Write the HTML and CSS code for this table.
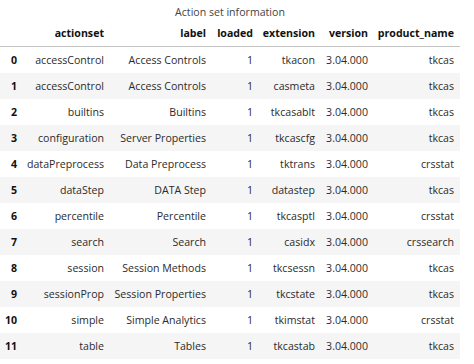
FILE: index.html
```html
<!DOCTYPE html>
<html lang="en">
<head>
    <meta charset="UTF-8">
    <title>Action set information</title>
    <link rel="stylesheet" href="styles.css">
</head>
<body>

<table class="dataframe">
    <caption>Action set information</caption>
    <colgroup>
        <col class="c-index">
        <col class="c-actionset">
        <col class="c-label">
        <col class="c-loaded">
        <col class="c-extension">
        <col class="c-version">
        <col class="c-product">
    </colgroup>
    <thead>
        <tr>
            <th></th>
            <th>actionset</th>
            <th>label</th>
            <th>loaded</th>
            <th>extension</th>
            <th>version</th>
            <th>product_name</th>
        </tr>
    </thead>
    <tbody>
        <tr><th>0</th><td>accessControl</td><td>Access Controls</td><td>1</td><td>tkacon</td><td>3.04.000</td><td>tkcas</td></tr>
        <tr><th>1</th><td>accessControl</td><td>Access Controls</td><td>1</td><td>casmeta</td><td>3.04.000</td><td>tkcas</td></tr>
        <tr><th>2</th><td>builtins</td><td>Builtins</td><td>1</td><td>tkcasablt</td><td>3.04.000</td><td>tkcas</td></tr>
        <tr><th>3</th><td>configuration</td><td>Server Properties</td><td>1</td><td>tkcascfg</td><td>3.04.000</td><td>tkcas</td></tr>
        <tr><th>4</th><td>dataPreprocess</td><td>Data Preprocess</td><td>1</td><td>tktrans</td><td>3.04.000</td><td>crsstat</td></tr>
        <tr><th>5</th><td>dataStep</td><td>DATA Step</td><td>1</td><td>datastep</td><td>3.04.000</td><td>tkcas</td></tr>
        <tr><th>6</th><td>percentile</td><td>Percentile</td><td>1</td><td>tkcasptl</td><td>3.04.000</td><td>crsstat</td></tr>
        <tr><th>7</th><td>search</td><td>Search</td><td>1</td><td>casidx</td><td>3.04.000</td><td>crssearch</td></tr>
        <tr><th>8</th><td>session</td><td>Session Methods</td><td>1</td><td>tkcsessn</td><td>3.04.000</td><td>tkcas</td></tr>
        <tr><th>9</th><td>sessionProp</td><td>Session Properties</td><td>1</td><td>tkcstate</td><td>3.04.000</td><td>tkcas</td></tr>
        <tr><th>10</th><td>simple</td><td>Simple Analytics</td><td>1</td><td>tkimstat</td><td>3.04.000</td><td>crsstat</td></tr>
        <tr><th>11</th><td>table</td><td>Tables</td><td>1</td><td>tkcastab</td><td>3.04.000</td><td>tkcas</td></tr>
    </tbody>
</table>

</body>
</html>
```

FILE: styles.css
```css
body {
    margin: 0;
    background-color: white;
    font-family: 'Open Sans', sans-serif;
    color: #2b2b2b;
}

.dataframe {
    border-collapse: collapse;
    border-spacing: 0;
    table-layout: fixed;
    width: 460px;
    font-size: 10.6px;
}

.dataframe caption {
    height: 20px;
    line-height: 24px;
    color: #444;
    text-align: center;
}

.c-index { width: 23px; }
.c-actionset { width: 87px; }
.c-label { width: 102px; }
.c-loaded { width: 47px; }
.c-extension { width: 62px; }
.c-version { width: 53px; }
.c-product { width: 86px; }

.dataframe th,
.dataframe td {
    text-align: right;
    vertical-align: middle;
    padding: 0 6px 0 0;
    white-space: nowrap;
    height: 26px;
    line-height: 16px;
}

.dataframe thead th {
    font-weight: bold;
    color: #111;
    border-bottom: 1px solid #c4c4c4;
}

.dataframe tbody th {
    font-weight: bold;
    color: #111;
}

.dataframe tbody tr:nth-child(even) {
    background-color: #f5f5f5;
}
```
